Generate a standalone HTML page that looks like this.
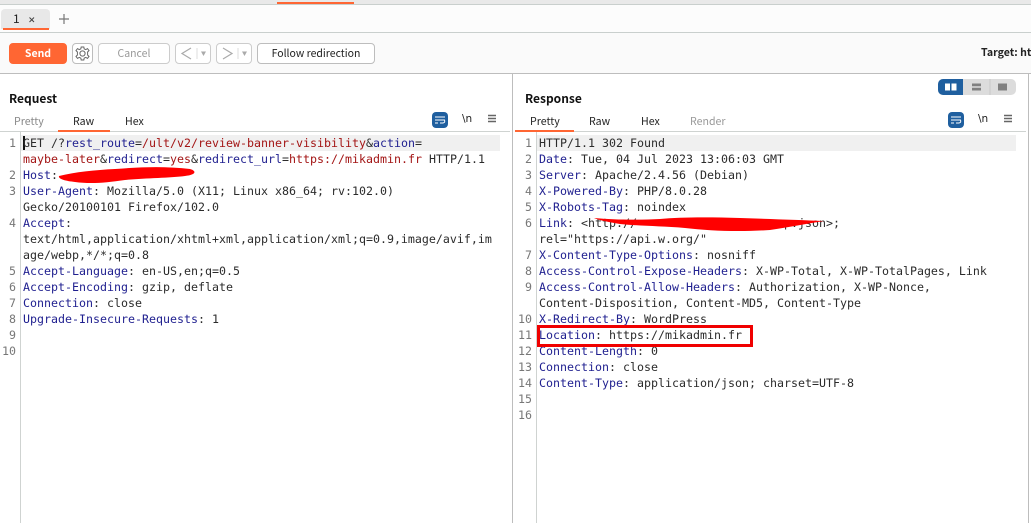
<!DOCTYPE html>
<html><head><meta charset="utf-8">
<style>
*{box-sizing:border-box}
html,body{margin:0;padding:0}
body{width:1031px;height:523px;overflow:hidden;background:#fff;position:relative;font-family:"Noto Sans CJK JP","Liberation Sans",sans-serif;color:#222}
.a{position:absolute}
.t{position:absolute;white-space:nowrap;font-size:10.6px;line-height:16px}
.btn{position:absolute;top:43px;height:21px;border:1px solid #bdbdbd;border-radius:4px;background:#fff;text-align:center;font-size:10.5px;line-height:20px;white-space:nowrap}
.code{position:absolute;font-family:"DejaVu Sans Mono","Liberation Mono",monospace;font-size:11.63px;line-height:16px;white-space:pre;color:#2b2b2b}
.n{position:absolute;font-family:"DejaVu Sans Mono","Liberation Mono",monospace;font-size:11.63px;line-height:16px;color:#777;text-align:right;white-space:pre}
b{font-weight:400;color:#1f1f8f}
i{font-style:normal;color:#a31515}
</style></head><body>
<div class="a" style="left:0;top:0;width:1031px;height:4px;background:#e9e9e9"></div>
<div class="a" style="left:0;top:4px;width:1031px;height:1px;background:#c9cfcd"></div>
<div class="a" style="left:277px;top:2px;width:77px;height:2px;background:#ff6633"></div>

<div class="a" style="left:0;top:5px;width:1031px;height:27px;background:#fcfcfc"></div>
<div class="a" style="left:1px;top:9px;width:49px;height:20px;background:#e8e8e8;border-radius:4px 4px 0 0"></div>
<div class="a" style="left:3px;top:28px;width:46px;height:2px;background:#ff6633"></div>
<div class="t" style="left:13px;top:11px;font-size:12px">1</div>
<svg class="a" style="left:29px;top:17px" width="6" height="6"><path d="M.5 .5L5 5M5 .5L.5 5" stroke="#444" stroke-width="1"/></svg>
<svg class="a" style="left:58px;top:13px" width="12" height="12"><path d="M6 1V11M1 6H11" stroke="#777" stroke-width="1.2"/></svg>
<div class="a" style="left:0;top:32px;width:1031px;height:1px;background:#c9cfcd"></div>

<div class="a" style="left:0;top:33px;width:1031px;height:40px;background:#fafafa"></div>
<div class="a" style="left:0;top:73px;width:1031px;height:1px;background:#bdbdbd"></div>
<div class="btn" style="left:9px;width:58px;background:#ff6633;border-color:#ff6633;color:#fff;font-weight:700">Send</div>
<div class="btn" style="left:72px;width:21px"></div>
<svg class="a" style="left:74px;top:45px" width="17" height="17" viewBox="0 0 17 17" fill="none" stroke="#666" stroke-width="1"><circle cx="8.5" cy="8.5" r="2.6"/><path d="M7.2 2H9.8L10.2 3.9 11.8 4.6 13.5 3.6 15 5.6 13.6 7 13.6 10 15 11.4 13.5 13.4 11.8 12.4 10.2 13.1 9.8 15H7.2L6.8 13.1 5.2 12.4 3.5 13.4 2 11.4 3.4 10 3.4 7 2 5.6 3.5 3.6 5.2 4.6 6.8 3.9Z"/></svg>
<div class="btn" style="left:98px;width:72px;color:#999;border-color:#ccc">Cancel</div>
<div class="btn" style="left:175px;width:36px;border-color:#ccc"></div>
<svg class="a" style="left:175px;top:43px" width="36" height="21" fill="none"><path d="M16 5L7 10.5 16 16" stroke="#aaa" stroke-width="1.2"/><path d="M22 5V16" stroke="#ddd"/><path d="M26 8.5H31L28.5 13Z" fill="#aaa"/></svg>
<div class="btn" style="left:216px;width:36px;border-color:#ccc"></div>
<svg class="a" style="left:216px;top:43px" width="36" height="21" fill="none"><path d="M7 5L16 10.5 7 16" stroke="#aaa" stroke-width="1.2"/><path d="M22 5V16" stroke="#ddd"/><path d="M26 8.5H31L28.5 13Z" fill="#aaa"/></svg>
<div class="btn" style="left:257px;width:118px;color:#222">Follow redirection</div>
<div class="t" style="left:981px;top:45px;font-weight:700;font-size:10.6px;color:#222">Target: ht</div>

<div class="a" style="left:512px;top:74px;width:1px;height:449px;background:#bdbdbd"></div>
<div class="a" style="left:1028px;top:74px;width:1px;height:449px;background:#bdbdbd"></div>

<div class="t" style="left:9px;top:91px;font-size:12px;font-weight:700;color:#111">Request</div>
<div class="t" style="left:525px;top:91px;font-size:12px;font-weight:700;color:#111">Response</div>

<div class="a" style="left:0;top:131px;width:510px;height:1px;background:#cfd3d1"></div>
<div class="a" style="left:515px;top:131px;width:511px;height:1px;background:#cfd3d1"></div>
<div class="t" style="left:14px;top:114px;color:#888">Pretty</div>
<div class="t" style="left:73px;top:114px">Raw</div>
<div class="t" style="left:125px;top:114px">Hex</div>
<div class="a" style="left:58px;top:130px;width:52px;height:2px;background:#ff6633"></div>
<div class="t" style="left:530px;top:114px">Pretty</div>
<div class="t" style="left:589px;top:114px">Raw</div>
<div class="t" style="left:641px;top:114px">Hex</div>
<div class="t" style="left:690px;top:114px;color:#999">Render</div>
<div class="a" style="left:515px;top:130px;width:59px;height:2px;background:#ff6633"></div>

<svg class="a" style="left:432px;top:112px" width="16" height="16"><rect width="16" height="16" rx="4" fill="#1f5f9f"/><path d="M3 5H13M3 8H12.5Q13.5 10.5 11 11H8M3 11H6" stroke="#fff" fill="none"/></svg>
<div class="t" style="left:462px;top:111px;font-size:10.5px;font-family:'DejaVu Sans',sans-serif">\n</div>
<svg class="a" style="left:488px;top:114px" width="9" height="10"><path d="M0 1.5H8M0 4.5H8M0 7.5H8" stroke="#666" stroke-width="1.4"/></svg>
<svg class="a" style="left:948px;top:112px" width="16" height="16"><rect width="16" height="16" rx="4" fill="#1f5f9f"/><path d="M3 5H13M3 8H12.5Q13.5 10.5 11 11H8M3 11H6" stroke="#fff" fill="none"/></svg>
<div class="t" style="left:978px;top:111px;font-size:10.5px;font-family:'DejaVu Sans',sans-serif">\n</div>
<svg class="a" style="left:1004px;top:114px" width="9" height="10"><path d="M0 1.5H8M0 4.5H8M0 7.5H8" stroke="#666" stroke-width="1.4"/></svg>

<svg class="a" style="left:938px;top:79px" width="78" height="16">
<rect width="78" height="16" rx="5" fill="#dcdcdc"/>
<path d="M5 0H25V16H5A5 5 0 0 1 0 11V5A5 5 0 0 1 5 0Z" fill="#1f5f9f"/>
<path d="M7 4.5H12V11.5H7ZM13.5 4.5H18.5V11.5H13.5Z" fill="#fff"/>
<path d="M34 4.5H43V7.3H34ZM34 8.7H43V11.5H34Z" fill="#808080"/>
<path d="M52 0V16" stroke="#c8c8c8"/>
<path d="M60 4.5H69V11.5H60Z" fill="#808080"/>
</svg>

<div class="a" style="left:20px;top:132px;width:1px;height:391px;background:#cfd3d1"></div>
<div class="a" style="left:536px;top:132px;width:1px;height:391px;background:#cfd3d1"></div>
<div class="a" style="left:21px;top:135px;width:479px;height:16px;background:#f0f0f0"></div>
<div class="a" style="left:537px;top:135px;width:479px;height:16px;background:#f0f0f0"></div>
<div class="a" style="left:23px;top:136px;width:2px;height:14px;background:#111"></div>

<div class="n" style="left:0;top:135px;width:16px">1

2
3

4


5
6
7
8
9
10</div>
<div class="code" style="left:23px;top:135px">GET /?<b>rest_route</b>=<i>/ult/v2/review-banner-visibility</i>&amp;<b>action</b>=
<i>maybe-later</i>&amp;<b>redirect</b>=<i>yes</i>&amp;<b>redirect_url</b>=<i>https://mikadmin.fr</i> HTTP/1.1
<b>Host</b>: 
<b>User-Agent</b>: Mozilla/5.0 (X11; Linux x86_64; rv:102.0)
Gecko/20100101 Firefox/102.0
<b>Accept</b>:
text/html,application/xhtml+xml,application/xml;q=0.9,image/avif,im
age/webp,*/*;q=0.8
<b>Accept-Language</b>: en-US,en;q=0.5
<b>Accept-Encoding</b>: gzip, deflate
<b>Connection</b>: close
<b>Upgrade-Insecure-Requests</b>: 1</div>
<svg class="a" style="left:55px;top:163px" width="145" height="24"><path d="M4 13C20 9 40 7 60 6 85 4 110 3 135 6 142 8 141 12 130 13 115 15 90 15 70 17 50 20 35 21 20 19 10 18 3 16 4 13Z" fill="#f00"/></svg>

<div class="n" style="left:516px;top:135px;width:16px">1
2
3
4
5
6

7
8
9

10
11
12
13
14
15
16</div>
<div class="code" style="left:539px;top:135px">HTTP/1.1 302 Found
<b>Date</b>: Tue, 04 Jul 2023 13:06:03 GMT
<b>Server</b>: Apache/2.4.56 (Debian)
<b>X-Powered-By</b>: PHP/8.0.28
<b>X-Robots-Tag</b>: noindex
<b>Link</b>: &lt;http://                     p.json&gt;;
rel="https://api.w.org/"
<b>X-Content-Type-Options</b>: nosniff
<b>Access-Control-Expose-Headers</b>: X-WP-Total, X-WP-TotalPages, Link
<b>Access-Control-Allow-Headers</b>: Authorization, X-WP-Nonce,
Content-Disposition, Content-MD5, Content-Type
<b>X-Redirect-By</b>: WordPress
<b>Location</b>: https://mikadmin.fr
<b>Content-Length</b>: 0
<b>Connection</b>: close
<b>Content-Type</b>: application/json; charset=UTF-8</div>
<svg class="a" style="left:590px;top:212px" width="240" height="24"><path d="M4 6C25 8 50 8 70 7 90 5 120 5 150 6 180 7 210 8 234 9 215 12 200 15 180 18 150 20 120 19 95 16 70 14 50 14 30 12 18 10 8 8 4 6Z" fill="#f00"/></svg>
<div class="a" style="left:537px;top:325px;width:216px;height:22px;border:3px solid #f00000"></div>
</body></html>
